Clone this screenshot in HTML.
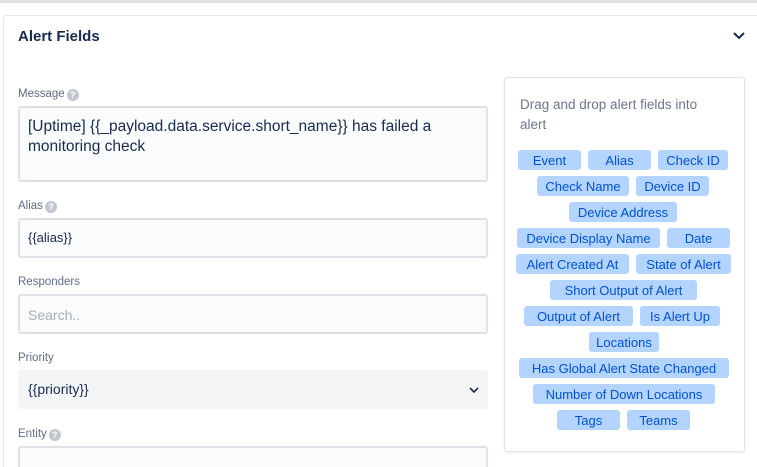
<!DOCTYPE html>
<html style="overflow:hidden"><head><style>
html,body{overflow:hidden;height:467px}
body{margin:0;width:757px;background:#fff;font-family:"Liberation Sans",sans-serif;position:relative}
.top{position:absolute;left:0;top:0;width:757px;height:3px;background:#dfe1e6}
.card{position:absolute;left:3px;top:15px;width:754px;height:452px;border:1px solid #e6e7ea;border-right:none;border-bottom:none;border-radius:3px 0 0 0;box-sizing:border-box}
.h{position:absolute;left:18px;top:28px;font-size:15px;font-weight:bold;color:#172b4d}
.lab{position:absolute;left:18px;font-size:11.5px;color:#5e6c84}
.q{display:inline-block;width:12px;height:12px;border-radius:50%;background:#c1c7d0;color:#fff;font-size:9px;text-align:center;line-height:12px;vertical-align:-1px;margin-left:2px;font-weight:bold}
.in{position:absolute;left:18px;width:470px;border:2px solid #dfe1e6;background:#fafbfc;box-sizing:border-box;border-radius:3px;font-size:13px;color:#172b4d;padding:0 8px}
.sel{position:absolute;left:18px;top:370px;width:470px;height:39px;background:#f4f5f7;border-radius:3px;font-size:14px;color:#172b4d;box-sizing:border-box;padding:11px 10px}
.panel{position:absolute;left:504px;top:77px;width:241px;height:375px;border:1px solid #e1e3e6;border-radius:3px;box-sizing:border-box;box-shadow:0 1px 2px rgba(0,0,0,.08)}
.pt{position:absolute;left:520px;top:95px;width:190px;font-size:13.5px;line-height:20px;color:#6b778c}
.t{position:absolute;height:20px;background:#b3d4ff;color:#0052cc;border-radius:3px;font-size:13px;line-height:21px;text-align:center}
</style></head><body>
<div class="top"></div>
<div class="card"></div>
<div class="h">Alert Fields</div>
<svg style="position:absolute;left:732px;top:31px" width="14" height="10" viewBox="0 0 14 10"><path d="M2 2l5 5 5-5" fill="none" stroke="#172b4d" stroke-width="2"/></svg>
<div class="lab" style="top:88px">Message<span class="q">?</span></div>
<div class="in" style="top:106px;height:76px;padding-top:9px;line-height:20px;font-size:15.5px">[Uptime] {{_payload.data.service.short_name}} has failed a monitoring check</div>
<div class="lab" style="top:200px">Alias<span class="q">?</span></div>
<div class="in" style="top:218px;height:40px;line-height:36px">{{alias}}</div>
<div class="lab" style="top:276px">Responders</div>
<div class="in" style="top:294px;height:40px;line-height:38px;color:#a5adba;font-size:14px">Search..</div>
<div class="lab" style="top:352px">Priority</div>
<div class="sel">{{priority}}</div>
<svg style="position:absolute;left:469px;top:386px" width="10" height="8" viewBox="0 0 10 8"><path d="M1 2l4 4 4-4" fill="none" stroke="#172b4d" stroke-width="1.6"/></svg>
<div class="lab" style="top:428px">Entity<span class="q">?</span></div>
<div class="in" style="top:446px;height:40px"></div>
<div class="panel"></div>
<div class="pt">Drag and drop alert fields into alert</div>
<div class="t" style="left:518px;top:150px;width:63px">Event</div>
<div class="t" style="left:588px;top:150px;width:63px">Alias</div>
<div class="t" style="left:658px;top:150px;width:70px">Check ID</div>
<div class="t" style="left:537px;top:176px;width:92px">Check Name</div>
<div class="t" style="left:636px;top:176px;width:73px">Device ID</div>
<div class="t" style="left:569px;top:202px;width:108px">Device Address</div>
<div class="t" style="left:517px;top:228px;width:143px">Device Display Name</div>
<div class="t" style="left:667px;top:228px;width:63px">Date</div>
<div class="t" style="left:516px;top:254px;width:113px">Alert Created At</div>
<div class="t" style="left:636px;top:254px;width:95px">State of Alert</div>
<div class="t" style="left:550px;top:280px;width:147px">Short Output of Alert</div>
<div class="t" style="left:524px;top:306px;width:109px">Output of Alert</div>
<div class="t" style="left:640px;top:306px;width:80px">Is Alert Up</div>
<div class="t" style="left:589px;top:332px;width:70px">Locations</div>
<div class="t" style="left:519px;top:358px;width:210px">Has Global Alert State Changed</div>
<div class="t" style="left:533px;top:384px;width:182px">Number of Down Locations</div>
<div class="t" style="left:557px;top:410px;width:63px">Tags</div>
<div class="t" style="left:627px;top:410px;width:63px">Teams</div>
</body></html>
